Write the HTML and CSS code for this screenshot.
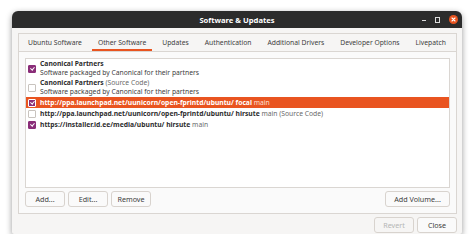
FILE: index.html
```html
<!DOCTYPE html>
<html lang="en">
<head>
  <meta charset="UTF-8" />
  <title>Software &amp; Updates</title>
  <link rel="stylesheet" href="styles.css">
</head>
<body>

  <div class="window">
    <div class="titlebar">
      <span class="title">Software &amp; Updates</span>
      <div class="controls">
        <span class="ctl-min"></span>
        <span class="ctl-max"></span>
        <span class="ctl-close">
          <svg width="9" height="9" viewBox="0 0 9 9">
            <circle cx="4.5" cy="4.5" r="4.5" fill="#e95420"/>
            <path d="M3 3 L6 6 M6 3 L3 6" stroke="#fff" stroke-width="1.1" stroke-linecap="round"/>
          </svg>
        </span>
      </div>
    </div>

    <div class="content">
      <div class="notebook">
        <div class="tabs">
          <span class="tab">Ubuntu Software</span>
          <span class="tab active">Other Software</span>
          <span class="tab">Updates</span>
          <span class="tab">Authentication</span>
          <span class="tab">Additional Drivers</span>
          <span class="tab">Developer Options</span>
          <span class="tab">Livepatch</span>
        </div>

        <div class="page">
          <div class="source-list">
            <div class="row two-line">
              <span class="check on"></span>
              <div class="text">
                <div><b>Canonical Partners</b></div>
                <div>Software packaged by Canonical for their partners</div>
              </div>
            </div>
            <div class="row two-line">
              <span class="check"></span>
              <div class="text">
                <div><b>Canonical Partners</b> <span class="dim">(Source Code)</span></div>
                <div>Software packaged by Canonical for their partners</div>
              </div>
            </div>
            <div class="row selected">
              <span class="check on"></span>
              <div class="text"><b>http://ppa.launchpad.net/uunicorn/open-fprintd/ubuntu/ focal</b> <span class="dim">main</span></div>
            </div>
            <div class="row">
              <span class="check"></span>
              <div class="text"><b>http://ppa.launchpad.net/uunicorn/open-fprintd/ubuntu/ hirsute</b> <span class="dim">main (Source Code)</span></div>
            </div>
            <div class="row">
              <span class="check on"></span>
              <div class="text"><b>https://installer.id.ee/media/ubuntu/ hirsute</b> <span class="dim">main</span></div>
            </div>
          </div>

          <div class="list-buttons">
            <button class="btn">Add...</button>
            <button class="btn">Edit...</button>
            <button class="btn">Remove</button>
            <button class="btn wide push">Add Volume...</button>
          </div>
        </div>
      </div>

      <div class="dialog-buttons">
        <button class="btn" disabled>Revert</button>
        <button class="btn">Close</button>
      </div>
    </div>
  </div>

</body>
</html>
```

FILE: styles.css
```css
body {
  margin: 0;
  background-color: #ffffff;
  font-family: "Noto Sans", "Open Sans", sans-serif;
  font-size: 6.75px;
  color: #3d3d3d;
}

.window {
  margin: 11px 0 0 12px;
  width: 450px;
  height: 223px;
  background-color: #f6f5f4;
  border-radius: 6px 6px 2px 2px;
  box-shadow: 0 2px 6px rgba(0, 0, 0, 0.4);
  overflow: hidden;
  display: flex;
  flex-direction: column;
}

.titlebar {
  height: 17px;
  background-color: #2c2c2c;
  display: flex;
  align-items: center;
  justify-content: center;
  position: relative;
}

.title {
  color: #fff;
  font-weight: bold;
  font-size: 7.6px;
}

.controls {
  position: absolute;
  right: 4px;
  top: 4px;
  display: flex;
  align-items: center;
  gap: 9px;
}

.ctl-min {
  width: 4px;
  height: 1px;
  background-color: #ddd;
  margin-top: 2px;
}

.ctl-max {
  width: 3px;
  height: 4px;
  border: 1px solid #ddd;
}

.ctl-close svg {
  display: block;
}

.content {
  flex: 1;
  display: flex;
  flex-direction: column;
  padding: 5px 5px 0 6px;
}

.notebook {
  height: 179px;
  border: 1px solid #dad6d2;
  background-color: #fafafa;
  display: flex;
  flex-direction: column;
}

.tabs {
  height: 17px;
  display: flex;
  align-items: stretch;
  padding-left: 1px;
  border-bottom: 1px solid #dad6d2;
  background-color: #f6f5f4;
  white-space: nowrap;
}

.tab {
  display: flex;
  align-items: center;
  margin: 0 2.5px;
  padding: 0 5.5px;
  color: #3d3d3d;
}

.tab.active {
  box-shadow: inset 0 -2px 0 #e95420;
}

.page {
  flex: 1;
  padding: 6px 6px 5px 6px;
  display: flex;
  flex-direction: column;
}

.source-list {
  height: 128px;
  background-color: #fff;
  border: 1px solid #dad6d2;
}

.row {
  display: flex;
  align-items: center;
  height: 11px;
  padding-left: 2px;
  white-space: nowrap;
}

.row.two-line {
  height: 19px;
  line-height: 8.5px;
}

.row.selected {
  background-color: #e95420;
  color: #fff;
}

.row.selected .dim {
  color: #fbe0d6;
}

.check {
  width: 6px;
  height: 6px;
  border: 1px solid #c8c3be;
  border-radius: 1px;
  background-color: #fff;
  margin-right: 4px;
  flex-shrink: 0;
  position: relative;
}

.check.on {
  background-color: #8a2d78;
  border-color: #8a2d78;
}

.check.on::after {
  content: "";
  position: absolute;
  left: 1.5px;
  top: 0.5px;
  width: 1.5px;
  height: 3px;
  border: solid #fff;
  border-width: 0 1px 1px 0;
  transform: rotate(40deg);
}

.row.selected .check.on {
  border-color: #fff;
}

.text b {
  color: #2e2e2e;
}

.row.selected .text b {
  color: #fff;
}

.dim {
  color: #6a6a6a;
}

.list-buttons {
  display: flex;
  gap: 3px;
  margin-top: 3px;
}

.btn {
  font-family: inherit;
  font-size: 7.2px;
  color: #3d3d3d;
  background-color: #fafafa;
  border: 1px solid #d8d3ce;
  border-radius: 3px;
  height: 16px;
  width: 40px;
  padding: 0;
}

.btn.wide {
  width: 65px;
}

.push {
  margin-left: auto;
}

.btn:disabled {
  color: #b5b5b5;
  background-color: #f6f5f4;
}

.dialog-buttons {
  display: flex;
  justify-content: flex-end;
  gap: 3px;
  margin-top: 3px;
}

.dialog-buttons .btn {
  width: 40px;
}
```
